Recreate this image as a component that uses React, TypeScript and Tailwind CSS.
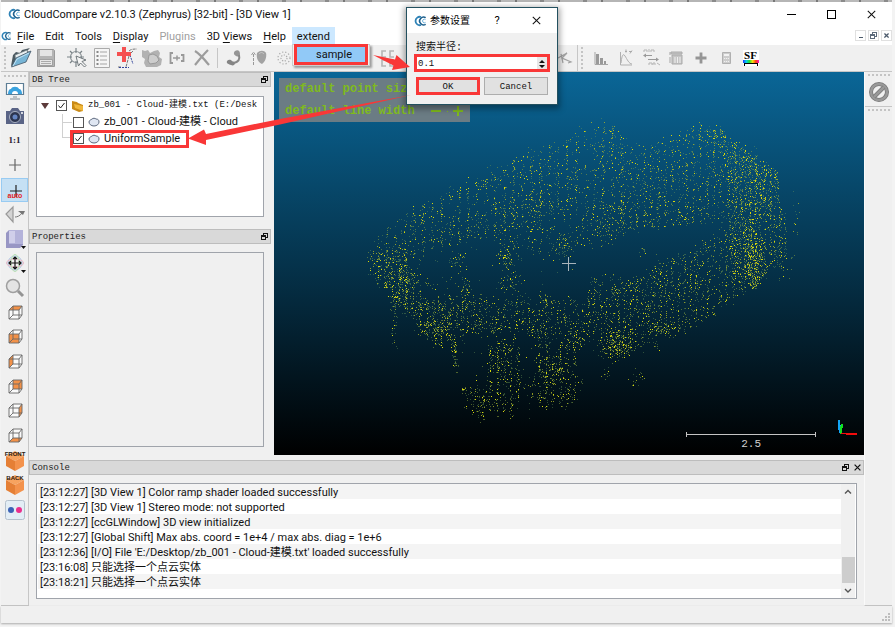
import type { ReactNode } from "react";

const UI = "font-['Roboto','Noto_Sans_CJK_SC',sans-serif]";
const MONO = "font-['Liberation_Mono','Noto_Sans_CJK_SC',monospace]";

/* ---------- point cloud ---------- */
type Pt = [number, number];

function rng(seed: number) {
  let s = seed;
  return () => {
    s = (s * 1664525 + 1013904223) >>> 0;
    return s / 4294967296;
  };
}

function inside(poly: Pt[], x: number, y: number) {
  let hit = false;
  for (let i = 0, j = poly.length - 1; i < poly.length; j = i++) {
    const [xi, yi] = poly[i];
    const [xj, yj] = poly[j];
    if (yi > y !== yj > y && x < ((xj - xi) * (y - yi)) / (yj - yi) + xi) hit = !hit;
  }
  return hit;
}

const WALLS: { n: number; step: number; poly: Pt[] }[] = [
  { n: 1350, step: 9, poly: [[364, 250], [380, 234], [415, 208], [450, 190], [520, 155], [580, 130], [600, 123], [612, 125], [625, 136], [625, 224], [600, 208], [580, 202], [540, 216], [505, 232], [480, 238], [450, 244], [430, 252], [400, 262], [366, 276]] },
  { n: 250, step: 6, poly: [[496, 205], [625, 205], [625, 236], [612, 242], [575, 246], [562, 256], [540, 250], [510, 264], [500, 255]] },
  { n: 1250, step: 7, poly: [[622, 138], [650, 147], [680, 133], [703, 122], [735, 142], [778, 172], [780, 200], [745, 225], [700, 222], [660, 228], [622, 232]] },
  { n: 950, step: 5, poly: [[712, 128], [745, 150], [777, 173], [779, 201], [786, 215], [786, 258], [768, 268], [757, 287], [735, 280], [725, 240], [732, 190]] },
  { n: 240, step: 4, poly: [[744, 222], [752, 220], [763, 255], [758, 285], [749, 285], [744, 255]] },
  { n: 1250, step: 6, poly: [[590, 276], [605, 292], [650, 270], [700, 247], [715, 234], [750, 222], [766, 250], [768, 274], [735, 300], [712, 314], [690, 330], [665, 330], [640, 346], [612, 343], [592, 330], [586, 298]] },
  { n: 560, step: 7, poly: [[368, 256], [400, 248], [410, 272], [425, 298], [452, 312], [454, 330], [450, 344], [438, 348], [418, 326], [394, 300], [376, 280]] },
  { n: 44, step: 5, poly: [[390, 300], [397, 300], [398, 344], [391, 344]] },
  { n: 520, step: 6, poly: [[425, 298], [460, 294], [500, 300], [545, 296], [590, 302], [592, 330], [580, 342], [545, 336], [520, 328], [490, 334], [455, 332]] },
  { n: 60, step: 5, poly: [[449, 335], [455, 335], [459, 372], [453, 368]] },
  { n: 300, step: 7, poly: [[486, 345], [500, 338], [520, 348], [522, 392], [513, 414], [480, 418], [470, 408], [476, 392], [487, 380]] },
  { n: 330, step: 7, poly: [[530, 330], [545, 335], [552, 355], [574, 330], [582, 345], [576, 372], [586, 388], [576, 400], [562, 410], [545, 404], [530, 396], [536, 362]] },
];

const BLOBS: [number, number, number, number, number][] = [
  [617, 345, 15, 10, 220], [662, 328, 14, 6, 80], [552, 371, 9, 10, 60], [507, 256, 9, 9, 60],
  [562, 245, 8, 10, 56], [457, 260, 6, 8, 32], [465, 288, 4, 14, 34], [511, 282, 8, 9, 46],
  [545, 300, 8, 4, 26], [605, 222, 16, 16, 80], [405, 280, 12, 18, 110], [433, 328, 12, 7, 60],
  [475, 398, 8, 14, 50], [605, 373, 4, 6, 10], [638, 380, 6, 8, 18], [643, 253, 4, 4, 8],
  [745, 165, 8, 20, 50], [717, 133, 8, 7, 30], [795, 212, 3, 16, 12], [785, 262, 6, 12, 26],
  [655, 345, 6, 5, 12], [536, 215, 8, 24, 40], [464, 390, 5, 4, 14], [500, 365, 12, 22, 40],
  [480, 320, 40, 24, 90], [560, 330, 40, 20, 90], [615, 290, 18, 14, 50], [530, 260, 50, 30, 36],
  [540, 385, 30, 22, 70], [660, 300, 40, 30, 60], [440, 290, 24, 26, 40],
];

function buildCloud() {
  const r = rng(2103);
  const layers = ["", "", "", ""];
  const put = (x: number, y: number) => {
    const k = r();
    const i = k < 0.36 ? 0 : k < 0.64 ? 1 : k < 0.87 ? 2 : 3;
    layers[i] += `M${Math.round(x)} ${Math.round(y)}h1v1h-1z`;
  };
  for (const { n, step, poly } of WALLS) {
    const xs = poly.map((p) => p[0]);
    const ys = poly.map((p) => p[1]);
    const x0 = Math.min(...xs);
    const y0 = Math.min(...ys);
    const w = Math.max(...xs) - x0;
    const h = Math.max(...ys) - y0;
    let left = n;
    while (left > 0) {
      let x = x0 + r() * w;
      const y = y0 + r() * h;
      if (r() < 0.5) x = Math.round(x / step) * step + (r() - 0.5) * 2;
      if (inside(poly, x, y)) {
        put(x, y + (r() + r() - 1) * 7);
        left--;
      }
    }
  }
  for (const [cx, cy, sx, sy, n] of BLOBS) {
    for (let i = 0; i < n; i++) {
      put(cx + (r() + r() + r() - 1.5) * 1.3 * sx, cy + (r() + r() + r() - 1.5) * 1.3 * sy);
    }
  }
  return layers;
}

const CLOUD = buildCloud();

function Scene() {
  return (
    <svg viewBox="274 72 590 383" preserveAspectRatio="xMidYMid meet" className="absolute inset-0 h-full w-full" shapeRendering="crispEdges">
      <path d={CLOUD[0]} fill="#6b9a58" opacity=".42" />
      <path d={CLOUD[1]} fill="#8ea638" opacity=".55" />
      <path d={CLOUD[2]} fill="#b0b820" opacity=".8" />
      <path d={CLOUD[3]} fill="#d8d808" />
      <path d="M562 263.500h14M568.500 257v14" stroke="#a9b4bb" />
      <path d="M686.500 434.500h129M686.500 432v5M815.500 432v5" stroke="#c4c4c4" fill="none" />
      <path d="M838 420h2v5h2v9h-2l-2-6z" fill="#12a5f5" />
      <path d="M841 424h2v4h-1v6h-2v-5z" fill="#10e020" />
      <path d="M841 433h16v2h-11v-1h-5z" fill="#f20c0c" />
    </svg>
  );
}

/* ---------- icons ---------- */
function Svg({ s = 22, children }: { s?: number; children: ReactNode }) {
  return (
    <svg width={s} height={s} viewBox="0 0 22 22" fill="none" className="shrink-0">
      {children}
    </svg>
  );
}

function CCLogo({ s = 12 }: { s?: number }) {
  return (
    <svg width={s} height={s} viewBox="0 0 12 12" fill="none" className="shrink-0">
      <path d="M7 2A4.200 4.200 0 1 0 7 10" stroke="#2f83b7" strokeWidth="1.800" />
      <path d="M6 4.200A2.200 2.200 0 0 0 6 7.800" stroke="#8cc4e4" strokeWidth=".9" />
      <path d="M11.700 2.700A3.900 3.900 0 1 0 11.700 9.300" stroke="#1d5f8c" strokeWidth="1.500" />
      <path d="M11.500 4.600A1.800 1.800 0 1 0 11.500 7.400" stroke="#6fb3db" strokeWidth="1" />
    </svg>
  );
}

function FloatIcon({ c = "#111" }: { c?: string }) {
  return (
    <svg width="7" height="7" viewBox="0 0 7 7" fill="none" shapeRendering="crispEdges">
      <path d="M2 .500h5M2.500 1v2M6.500 1v4M5 4.500h2M0 2.500h5M0 3.500h5M.5 3v4M4.500 3v4M0 6.500h5" stroke={c} />
    </svg>
  );
}

function CloseIcon({ s = 7, c = "#111", w = 1.4 }: { s?: number; c?: string; w?: number }) {
  return (
    <svg width={s} height={s} viewBox="0 0 8 8" fill="none">
      <path d="M.7.7l6.600 6.600M7.300.7L.7 7.300" stroke={c} strokeWidth={w} />
    </svg>
  );
}

const OpenIcon = (
  <Svg>
    <path d="M1 19L3 8l3-3 4 1 2-3 8-2-3 3 3 1-4 9z" fill="#4b5960" />
    <path d="M5 8l12-5 1 4-12 9z" fill="#e8eef0" stroke="#67757b" strokeWidth=".7" />
    <path d="M1.500 20L6 11l15-7-5 11z" fill="#77b5d6" stroke="#456" strokeWidth=".8" />
    <path d="M3 19l4-7 12-6" stroke="#cde8f5" strokeWidth=".9" />
  </Svg>
);
const SaveIcon = (
  <Svg>
    <path d="M2.500 2.500h16l1 1v16h-17z" fill="#b4b4b4" stroke="#9a9a9a" />
    <path d="M5 3h12v6H5z" fill="#e4e4e4" />
    <path d="M4.500 12.500h13v6h-13z" fill="#e6e6e6" stroke="#a0a0a0" />
    <path d="M6 14.500h10M6 16.500h10" stroke="#aaa" />
  </Svg>
);
const PickIcon = (
  <Svg>
    <circle cx="10" cy="10" r="5.500" stroke="#8d9498" strokeWidth="1.200" />
    <path d="M10 1v5M10 14v6M1 10h5M14 10h4M4 4l2 2M16 4l-2 2M4 16l2-2" stroke="#7b8488" strokeWidth="1.200" />
    <path d="M10 9l10 4-4 1.500 4 4-1.500 1.500-4-4-2 3z" fill="#f4f4f4" stroke="#70787c" />
  </Svg>
);
const ListIcon = (
  <Svg>
    <path d="M3.500 1.500h15v19h-15z" fill="#f5f5f5" stroke="#aaa" />
    <path d="M5.500 5h2M5.500 9h2M5.500 13h2M5.500 17h2" stroke="#888" strokeWidth="2" />
    <path d="M9 5h7M9 9h7M9 13h7M9 17h7" stroke="#a5a5a5" strokeWidth="1.200" />
  </Svg>
);
const TransIcon = (
  <Svg>
    <path d="M2 20h3M13 4c2-2 5-2 8-2M13 9l-3 11M17 4l-4 4" stroke="#777" strokeDasharray="3 1" />
    <path d="M14 8l3 9M3 20.500h10" stroke="#33469c" strokeDasharray="2 1" />
    <path d="M6 0h4v5h5v4h-5v6H6V9H1V5h5z" fill="#f55050" />
  </Svg>
);
const CloneIcon = (
  <Svg>
    <path d="M1 3l3 1 3-1 2 3 4-2 4-1 2 3-1 4 3 2-1 6-4 2H5l-2-4 1-4-3-2z" fill="#b2b2b2" />
    <path d="M8 8l4-1 4 2 2 4-3 3-6 1-2-3z" fill="#cdcdcd" stroke="#999" />
  </Svg>
);
const MergeIcon = (
  <Svg>
    <path d="M7 6H4.500v10H7M15 8h2.500v6H15" stroke="#999" strokeWidth="1.800" />
    <path d="M7 11h7M11 8.500v5" stroke="#999" strokeWidth="1.500" />
  </Svg>
);
const DeleteIcon = (
  <Svg>
    <path d="M4 4c5 3 9 8 14 14M17 3C12 8 8 13 4 18" stroke="#9c9c9c" strokeWidth="2.200" />
  </Svg>
);
const RegIcon = (
  <Svg>
    <path d="M12 4c3-2 5 0 5 3s-2 3-4 2-3-3-1-5z" fill="#959595" />
    <path d="M4 14c2-2 4-1 5 0s3 0 3 2-2 3-4 2-5-1-4-4z" fill="#858585" />
    <path d="M16 8c1 4-1 7-5 8" stroke="#888" strokeWidth="2" />
  </Svg>
);
const ShieldIcon = (
  <Svg>
    <path d="M9 6c3-3 7-3 9 0 1 4-1 9-4 11-4-2-6-6-5-11z" fill="#a2a2a2" />
    <path d="M11 7c2-2 3-2 5 0" stroke="#c9c9c9" />
    <path d="M5.500 18V6M3.500 8l2-3 2 3" stroke="#999" strokeDasharray="3 1" />
  </Svg>
);
const DotsIcon = (
  <Svg>
    <circle cx="11" cy="11" r="6" stroke="#aaa" strokeWidth="1.200" strokeDasharray="1.200 2" />
    <circle cx="11" cy="11" r="3" stroke="#aaa" strokeWidth="1.200" strokeDasharray="1.200 1.500" />
  </Svg>
);
const CompIcon = (
  <Svg>
    <path d="M12 4H8v6h4M20 4h-4v6h4M12 13H8v6h4M20 13h-4v6h4" stroke="#b5b5b5" strokeWidth="1.600" />
  </Svg>
);
const ZigIcon = (
  <Svg>
    <path d="M4 11L13 6l-5 5 9 4-3 1M7 7l2 9" stroke="#a2a2a2" strokeWidth="1.200" />
  </Svg>
);
const HistIcon = (
  <Svg>
    <path d="M5 5v12.500h13" stroke="#a5a5a5" />
    <path d="M6 7h3v10H6zM10 11h3v6h-3zM14 14h2v3h-2z" fill="#999" />
  </Svg>
);
const CurveIcon = (
  <Svg>
    <path d="M5.500 5v13H17M6 16C7 8 8 6 10 9s4 8 7 8" stroke="#b0b0b0" />
    <path d="M10 4.500h2M14 4.500h3M11 2.500v3M15 6.500l2-3" stroke="#aaa" />
  </Svg>
);
const MinMaxIcon = (
  <Svg>
    <path d="M5 8.500h7M8 12.500h8" stroke="#999" strokeWidth="1.200" />
    <path d="M3 8.500l3-2v4zM19 12.500l-3-2v4z" fill="#999" />
    <path d="M4 5V3h3v2M9 2v3M11 5V3h3v2M9 18v-2h3v2M13 18v-2h2v2M17 16l3 2" stroke="#b5b5b5" />
  </Svg>
);
const GridIcon = (
  <Svg>
    <path d="M6 5h11v2H6zM7 8h10v9H7z" fill="#c5c5c5" stroke="#aaa" />
    <path d="M10 10v6M12.500 10v6M15 10v6" stroke="#eee" />
    <path d="M5 5v3M5 10v6" stroke="#a5a5a5" />
  </Svg>
);
const PlusIcon = (
  <Svg>
    <path d="M11 5.500v11M5.500 11h11" stroke="#959595" strokeWidth="2.800" />
  </Svg>
);
const CalcIcon = (
  <Svg>
    <path d="M7.500 5.500h8v11h-8z" fill="#ccc" stroke="#b0b0b0" />
    <path d="M9 8h5" stroke="#f2f2f2" strokeWidth="2" />
    <path d="M9 11.500h5M9 14.500h5" stroke="#f0f0f0" strokeDasharray="1.200 .8" />
  </Svg>
);

/* ---------- left side icons ---------- */
const faces: Record<string, string> = {
  top: "M2 5l4-4h9l-3 4z",
  front: "M2 5h10v9H2z",
  left: "M2 5l4-4v9l-4 4z",
  back: "M6 1h9v9H6z",
  right: "M12 5l3-4v9l-3 4z",
  bottom: "M2 14l4-4h9l-3 4z",
};

function CubeIcon({ face }: { face: string }) {
  return (
    <svg width="16" height="16" viewBox="0 0 16 16" fill="none">
      <path d="M2 5l4-4h9v9l-3 4H2z" fill="#fafafa" />
      <path d={faces[face]} fill="#f29148" />
      <path d="M2 5h10v9H2zM2 5l4-4h9l-3 4M15 1v9l-3 4M6 1v9h9M6 10l-4 4" stroke="#666" strokeWidth=".9" />
    </svg>
  );
}

function BoxIcon({ label }: { label: string }) {
  return (
    <svg width="22" height="24" viewBox="0 0 22 24">
      <path d="M2 7l9-5 9 5-9 5z" fill="#f7a35f" />
      <path d="M2 7l9 5v10l-9-5z" fill="#e57f35" />
      <path d="M20 7l-9 5v10l9-5z" fill="#f3924c" />
      <text x="11" y="7" textAnchor="middle" fontSize="6" fontWeight="700" fill="#2a1a10" fontFamily="Liberation Sans, sans-serif">
        {label}
      </text>
    </svg>
  );
}

const SIDE: { name: string; icon: ReactNode; on?: boolean }[] = [
  {
    name: "Display settings",
    icon: (
      <Svg>
        <path d="M2.500 3.500h17v11h-17z" fill="#fff" stroke="#5d7e96" strokeWidth="1.200" />
        <path d="M4 14c0-3 1-5 3-5 1-3 7-3 8 0 2 0 3 2 3 5z" fill="#3ba3df" />
        <path d="M8 14a3 3 0 0 1 6 0z" fill="#fff" />
        <path d="M9 16h4v2h3v2H6v-2h3z" fill="#b9bfc3" />
      </Svg>
    ),
  },
  {
    name: "Camera",
    icon: (
      <Svg>
        <path d="M2 6h4l2-3h6l2 3h4v13H2z" fill="#5a6486" />
        <circle cx="11" cy="12" r="5.500" fill="#2c3550" stroke="#aab2c4" />
        <circle cx="11" cy="12" r="2.500" fill="#6585c2" />
        <path d="M17 7h2v2h-2z" fill="#d6dae2" />
      </Svg>
    ),
  },
  { name: "Zoom 1:1", icon: <span className="font-['Liberation_Serif',serif] text-[9px] font-bold text-[#2a1a30]">1:1</span> },
  {
    name: "Pick center",
    icon: (
      <Svg>
        <path d="M11 5v12M5 11h12" stroke="#666" strokeWidth="1.200" />
      </Svg>
    ),
  },
  {
    name: "Auto pick center",
    on: true,
    icon: (
      <svg width="22" height="22" viewBox="0 0 22 22">
        <path d="M12 6v12M6 12h12" stroke="#222" strokeWidth="1.200" />
        <text x="11" y="19" textAnchor="middle" fontSize="7" fontWeight="700" fill="#e32222" fontFamily="Liberation Sans, sans-serif">
          auto
        </text>
      </svg>
    ),
  },
  {
    name: "Flip view",
    icon: (
      <Svg>
        <path d="M9 4v15L2 11z" fill="#d4d4d4" stroke="#999" strokeWidth="1.200" />
        <path d="M11 14c2 0 5-1 7-4" stroke="#777" />
        <path d="M14 8l7 0-2 4z" fill="#777" />
      </Svg>
    ),
  },
  {
    name: "Solid view",
    icon: (
      <Svg>
        <path d="M2 5l3-3h14v15l-3 3H2z" fill="#9896c4" />
        <path d="M5 2h14v14H5z" fill="#b4b3da" />
        <path d="M5 3h6v12H5z" fill="#d0cfea" />
        <path d="M17 18h5l-2.500 3z" fill="#111" />
      </Svg>
    ),
  },
  {
    name: "Move mode",
    icon: (
      <Svg>
        <circle cx="11" cy="11" r="7" stroke="#a9c9e6" />
        <ellipse cx="11" cy="11" rx="8.500" ry="4" stroke="#e7b4c4" />
        <ellipse cx="11" cy="11" rx="4" ry="8.500" stroke="#b6dfb0" />
        <path d="M11 5v12M5 11h12M9 7l2-2 2 2M9 15l2 2 2-2M7 9l-2 2 2 2M15 9l2 2-2 2" stroke="#111" strokeWidth="1.200" />
        <path d="M17 18h5l-2.500 3z" fill="#111" />
      </Svg>
    ),
  },
  {
    name: "Zoom",
    icon: (
      <Svg>
        <circle cx="9" cy="9" r="6.500" fill="#e4e4e4" stroke="#9f9f9f" strokeWidth="1.500" />
        <path d="M14 14l5 5" stroke="#949494" strokeWidth="3" />
      </Svg>
    ),
  },
  { name: "Top view", icon: <CubeIcon face="top" /> },
  { name: "Front view", icon: <CubeIcon face="front" /> },
  { name: "Left view", icon: <CubeIcon face="left" /> },
  { name: "Back view", icon: <CubeIcon face="back" /> },
  { name: "Right view", icon: <CubeIcon face="right" /> },
  { name: "Bottom view", icon: <CubeIcon face="bottom" /> },
  { name: "Front isometric", icon: <BoxIcon label="FRONT" /> },
  { name: "Back isometric", icon: <BoxIcon label="BACK" /> },
  {
    name: "Stereo",
    icon: (
      <Svg>
        <rect x="1.500" y="1.500" width="19" height="19" rx="2" fill="#e3edf5" stroke="#b4c0cc" />
        <circle cx="7" cy="11" r="3" fill="#3b62b5" />
        <circle cx="15" cy="11" r="3" fill="#ea2f8c" />
      </Svg>
    ),
  },
];

/* ---------- shared parts ---------- */
function Tool({ name, children }: { name: string; children: ReactNode }) {
  return (
    <button aria-label={name} className="flex h-[25px] w-[25px] shrink-0 items-center justify-center">
      {children}
    </button>
  );
}

function VGrip() {
  return <span className="h-[22px] w-[2px] shrink-0 border-l-2 border-dotted border-[#c4c4c4]" />;
}

function HGrip() {
  return <span className="h-[2px] w-[22px] shrink-0 border-t-2 border-dotted border-[#c4c4c4]" />;
}

function DockHeader({ title, closable = false }: { title: string; closable?: boolean }) {
  return (
    <header className={`flex h-[15px] shrink-0 items-center gap-[5px] border border-[#bdbdbd] bg-[#d9d9d9] px-[2px] text-[#222] ${MONO}`}>
      <h2 className="flex-1 pt-px text-[9px] leading-[14px]">{title}</h2>
      <button aria-label={`Float ${title}`}>
        <FloatIcon />
      </button>
      {closable && (
        <button aria-label={`Close ${title}`}>
          <CloseIcon />
        </button>
      )}
    </header>
  );
}

function Check({ id, on }: { id: string; on: boolean }) {
  return (
    <span className="relative flex h-[11px] w-[11px] shrink-0">
      <input id={id} type="checkbox" defaultChecked={on} className="peer h-full w-full appearance-none border border-[#555] bg-white" />
      <svg viewBox="0 0 11 11" fill="none" className="pointer-events-none absolute inset-0 hidden peer-checked:block">
        <path d="M2.500 5.500l2 2.500 4-5" stroke="#222" />
      </svg>
    </span>
  );
}

function CloudIcon() {
  return (
    <svg width="12" height="10" viewBox="0 0 12 10">
      <path d="M1 5c0-2 2-2 3-3s3-1 4 0c2 0 3 1 3 3s-2 4-5 4-5-2-5-4z" fill="#dfe6f2" stroke="#5f6b80" />
    </svg>
  );
}

const MENUS: [string, string, string][] = [
  ["", "F", "ile"],
  ["Edit", "", ""],
  ["Tools", "", ""],
  ["", "D", "isplay"],
  ["Plugins", "", ""],
  ["3D ", "V", "iews"],
  ["", "H", "elp"],
  ["extend", "", ""],
];

const LOG = [
  "[23:12:27] [3D View 1] Color ramp shader loaded successfully",
  "[23:12:27] [3D View 1] Stereo mode: not supported",
  "[23:12:27] [ccGLWindow] 3D view initialized",
  "[23:12:27] [Global Shift] Max abs. coord = 1e+4 / max abs. diag = 1e+6",
  "[23:12:36] [I/O] File 'E:/Desktop/zb_001 - Cloud-建模.txt' loaded successfully",
  "[23:16:08] 只能选择一个点云实体",
  "[23:18:21] 只能选择一个点云实体",
];

function ParamDialog() {
  return (
    <div role="dialog" aria-label="参数设置" className="absolute top-[7px] left-[406px] w-[152px] border border-[#23505f] bg-[#f0f0f0] pb-[9px] shadow-[0_2px_6px_2px_rgba(0,0,0,0.35)]">
      <div className={`flex h-[25px] items-center bg-white pl-[7px] text-black ${UI}`}>
        <CCLogo />
        <span className="ml-[4px] flex-1 text-[10px] leading-[14px]">参数设置</span>
        <button className="w-[36px] text-[11px] leading-[14px]">?</button>
        <button aria-label="Close dialog" className="flex w-[42px] justify-center">
          <CloseIcon s={9} w={0.9} />
        </button>
      </div>
      <form className={`px-[9px] text-[#111] ${MONO}`} onSubmit={(e) => e.preventDefault()}>
        <label htmlFor="radius" className="block pt-[8px] text-[10px] leading-[14px]">
          搜索半径:
        </label>
        <div className="mt-px flex h-[15px] items-center border border-[#7aa7c7] bg-white">
          <input id="radius" type="text" defaultValue="0.1" className="w-0 flex-1 bg-white pt-[2px] pl-px text-[9px] leading-[11px] outline-none" />
          <svg width="10" height="13" viewBox="0 0 10 13" className="bg-[#e8e8e8]">
            <path d="M2 6l3-3 3 3zM2 8l3 3 3-3z" fill="#111" />
          </svg>
        </div>
        <div className="mt-[6px] grid grid-cols-2 gap-[4px] text-[9px] leading-[16px]">
          <button className="h-[18px] border border-[#adadad] bg-[#e1e1e1] pt-px">OK</button>
          <button className="h-[18px] border border-[#adadad] bg-[#e1e1e1] pt-px">Cancel</button>
        </div>
      </form>
    </div>
  );
}

function Annotations() {
  return (
    <svg width="895" height="627" viewBox="0 0 895 627" fill="none" className="pointer-events-none absolute top-0 left-0">
      <g stroke="#f93737" strokeWidth="3">
        <path d="M295.500 45.500h71v18h-71z" />
        <path d="M415.500 55.500h133v15h-133z" />
        <path d="M417.500 78.500h61v15h-61z" />
        <path d="M71.500 131.500h116v15h-116z" />
      </g>
      <path d="M373 55l22 4.500 1.500-4.500 13.500 12-18 3 1.500-4.500z" fill="#f93737" />
      <path d="M411 95L280 119l-74 15-2-4.500-16 9 18 6.500v-5l74-15.500z" fill="#f93737" />
    </svg>
  );
}

export default function App() {
  return (
    <div className={`relative flex h-screen w-full flex-col overflow-hidden bg-[#f3f3f3] pr-[3px] pb-[4px] pl-px text-[#111] ${UI}`}>
      <div className="h-[2px] shrink-0 bg-[repeating-linear-gradient(90deg,#b5b5b5_0_23px,#8a8a8a_23px_27px,#b9b9b9_27px_41px,#777_41px_43px)]" />

      <div className="flex h-[24px] shrink-0 items-center bg-white pr-[16px] pl-[7px]">
        <CCLogo />
        <h1 className="ml-[4px] flex-1 pt-px text-[11px] leading-[16px]">CloudCompare v2.10.3 (Zephyrus) [32-bit] - [3D View 1]</h1>
        <div className="flex w-[89px] items-center justify-between">
          <button aria-label="Minimize" className="w-[9px] border-t border-black" />
          <button aria-label="Maximize" className="h-[9px] w-[9px] border border-black" />
          <button aria-label="Close">
            <CloseIcon s={9} w={0.9} />
          </button>
        </div>
      </div>

      <nav className="relative flex h-[19px] shrink-0 items-center gap-px bg-white">
        <CCLogo s={10} />
        {MENUS.map(([pre, key, post]) => (
          <button
            key={pre + key + post}
            className={`h-[18px] px-[5px] text-[11px] leading-[19px] ${pre === "extend" ? "bg-[#cce8ff]" : ""} ${pre === "Plugins" ? "text-[#a0a0a0]" : ""}`}
          >
            {pre}
            {key && <u className="underline-offset-2">{key}</u>}
            {post}
          </button>
        ))}
        <div className="ml-auto flex gap-[2px]">
          <button aria-label="Minimize view" className="flex h-[11px] w-[11px] items-end justify-center border border-[#e0e0e0] pb-[2px]">
            <span className="w-[4px] border-t border-[#4c5a6b]" />
          </button>
          <button aria-label="Restore view" className="flex h-[11px] w-[11px] items-center justify-center border border-[#e0e0e0]">
            <FloatIcon c="#5c6a7b" />
          </button>
          <button aria-label="Close view" className="flex h-[11px] w-[11px] items-center justify-center border border-[#e0e0e0]">
            <CloseIcon s={5} c="#4c5a6b" w={2} />
          </button>
        </div>
        <div role="menu" className="absolute top-[18px] left-[291px] w-[78px] border border-[#ccc] bg-[#f2f2f2] p-px shadow-[2px_2px_2px_rgba(0,0,0,0.35)]">
          <button role="menuitem" className="block h-[18px] w-full bg-[#91c9f7] pl-[6px] text-[11px] leading-[18px]">
            sample
          </button>
        </div>
      </nav>

      <div className="flex h-[27px] shrink-0 items-center border-b border-[#c6c6c6] bg-[#f0f0f0] pl-[3px]">
        <VGrip />
        <div className="flex pl-[2px]">
          <Tool name="Open">{OpenIcon}</Tool>
          <Tool name="Save">{SaveIcon}</Tool>
        </div>
        <div className="flex pl-[6px]">
          <Tool name="Point picking">{PickIcon}</Tool>
          <Tool name="Point list">{ListIcon}</Tool>
          <Tool name="Translate / rotate">{TransIcon}</Tool>
          <Tool name="Clone">{CloneIcon}</Tool>
          <Tool name="Merge">{MergeIcon}</Tool>
          <Tool name="Delete">{DeleteIcon}</Tool>
        </div>
        <span className="mx-[3px] h-[20px] border-l border-[#c6c6c6]" />
        <Tool name="Register">{RegIcon}</Tool>
        <Tool name="Fine registration">{ShieldIcon}</Tool>
        <Tool name="Subsample">{DotsIcon}</Tool>
        <span className="w-[76px] shrink-0" />
        <Tool name="Cloud distance">{CompIcon}</Tool>
        <span className="w-[155px] shrink-0" />
        <Tool name="Segment">{ZigIcon}</Tool>
        <span className="mr-[3px] h-[26px] border-l border-[#c6c6c6]" />
        <VGrip />
        <div className="flex pl-[5px]">
          <Tool name="Histogram">{HistIcon}</Tool>
          <Tool name="Statistics">{CurveIcon}</Tool>
          <Tool name="Filter by value">{MinMaxIcon}</Tool>
          <Tool name="Delete scalar field">{GridIcon}</Tool>
          <Tool name="Add scalar field">{PlusIcon}</Tool>
          <Tool name="Arithmetic">{CalcIcon}</Tool>
          <Tool name="Scalar field scale">
            <span className="flex flex-col items-center bg-white">
              <span className="font-['Liberation_Serif',serif] text-[11px] leading-[10px] font-bold text-black">SF</span>
              <span className="h-[3px] w-[16px] bg-[linear-gradient(90deg,#2030ff,#00d0f0,#20e030,#f8e010,#ff4010,#ff10c0)]" />
              <span className="h-[3px] w-[14px] border-x border-t border-black" />
            </span>
          </Tool>
        </div>
      </div>

      <div className="flex min-h-0 flex-1 bg-[#f0f0f0]">
        <aside className="flex w-[28px] shrink-0 flex-col items-center border-r border-b border-[#c6c6c6] pt-[3px]">
          <HGrip />
          <div className="mt-[2px] flex h-[443px] w-full flex-col justify-between">
            {SIDE.map((b) => (
              <button
                key={b.name}
                aria-label={b.name}
                className={`flex h-[24px] w-full items-center justify-center ${b.on ? "border border-[#98cbf2] bg-[#c5e0f4]" : ""}`}
              >
                {b.icon}
              </button>
            ))}
          </div>
        </aside>

        <main className="flex min-w-0 flex-1 flex-col">
          <div className="flex min-h-0 flex-1 gap-[3px]">
            <div className="flex w-[242px] shrink-0 flex-col">
              <DockHeader title="DB Tree" />
              <div className="mx-[7px] mt-[9px] h-[121px] shrink-0 overflow-hidden border border-[#a0a4ab] bg-white">
                <ul className="text-[11px]">
                  <li className={`flex h-[17px] items-center whitespace-nowrap text-[9px] ${MONO}`}>
                    <svg width="8" height="6" viewBox="0 0 8 6" className="mr-[7px] ml-[4px] shrink-0">
                      <path d="M0 0h8L4 6z" fill="#5c3a3a" />
                    </svg>
                    <Check id="n0" on />
                    <svg width="13" height="12" viewBox="0 0 13 12" className="mx-[4px] shrink-0">
                      <path d="M1 1l5 1 1 1 5 2v6l-4 1-7-3z" fill="#c98a17" />
                      <path d="M3 4l9 2v5l-8-3z" fill="#f0b73a" />
                    </svg>
                    <label htmlFor="n0" className="pt-px">
                      zb_001 - Cloud-建模.txt (E:/Desk
                    </label>
                  </li>
                  <li className="flex h-[16px] items-center whitespace-nowrap">
                    <span className="ml-[25px] h-full w-[11px] border-l border-[#d0d0d0] pt-[8px]">
                      <span className="block w-[9px] border-t border-[#d0d0d0]" />
                    </span>
                    <Check id="n1" on={false} />
                    <span className="mx-[4px]">
                      <CloudIcon />
                    </span>
                    <label htmlFor="n1" className="pt-px">
                      zb_001 - Cloud-建模 - Cloud
                    </label>
                  </li>
                  <li className="flex h-[17px] items-center whitespace-nowrap">
                    <span className="ml-[25px] h-full w-[11px]">
                      <span className="block h-[8px] w-[9px] border-b border-l border-[#d0d0d0]" />
                    </span>
                    <Check id="n2" on />
                    <span className="mx-[4px]">
                      <CloudIcon />
                    </span>
                    <label htmlFor="n2" className="pt-px">
                      UniformSample
                    </label>
                  </li>
                </ul>
              </div>
              <div className="mt-[12px] flex min-h-0 flex-1 flex-col">
                <DockHeader title="Properties" />
                <div className="mx-[7px] mt-[8px] mb-[8px] flex-1 border border-[#a0a4ab]" />
              </div>
            </div>

            <section aria-label="3D View 1" className="relative min-w-0 flex-1 bg-[linear-gradient(#0a6697,#000)]">
              <Scene />
              <div className="absolute top-[6px] left-[5px] h-[44px] w-[191px] bg-[#6b7c84] pl-[6px] font-['Liberation_Mono',monospace] text-[12px] leading-[22px] font-bold whitespace-pre text-[#7fba1e]">
                <p className="h-[22px]">default point size - +</p>
                <p className="flex h-[22px] items-center">
                  default line width
                  <span className="ml-[16px] h-[2px] w-[10px] bg-[#7fba1e]" />
                  <span className="ml-[6px] h-px w-px bg-[#7fba1e]" />
                  <svg width="10" height="10" viewBox="0 0 10 10" className="ml-[5px]">
                    <path d="M4 0h2v4h4v2H6v4H4V6H0V4h4z" fill="#7fba1e" />
                  </svg>
                </p>
              </div>
              <span className="absolute right-[103px] bottom-[4px] font-['Liberation_Mono',monospace] text-[11px] leading-[14px] text-[#d0d0d0]">2.5</span>
            </section>
          </div>

          <section aria-label="Console" className="mt-[5px] flex h-[146px] shrink-0 flex-col pb-[7px]">
            <DockHeader title="Console" closable />
            <div className="mx-[7px] mt-[8px] flex min-h-0 flex-1 overflow-hidden border border-[#a0a4ab] bg-white px-px">
              <ol className="flex-1">
                {LOG.map((line, i) => (
                  <li key={i} className="h-[15px] pt-px pl-[2px] text-[11px] leading-[16px] whitespace-nowrap odd:bg-[#f4f4f4]">
                    {line}
                  </li>
                ))}
              </ol>
              <div className="flex w-[14px] flex-col items-center bg-[#f0f0f0]">
                <svg width="8" height="16" viewBox="0 0 8 16" fill="none">
                  <path d="M1 9.500l3-3 3 3" stroke="#555" strokeWidth="1.400" />
                </svg>
                <span className="flex-1" />
                <span className="h-[26px] w-[13px] bg-[#cdcdcd]" />
                <svg width="8" height="15" viewBox="0 0 8 15" fill="none">
                  <path d="M1 6l3 3 3-3" stroke="#555" strokeWidth="1.400" />
                </svg>
              </div>
            </div>
          </section>
        </main>

        <aside className="flex w-[28px] shrink-0 flex-col items-center border-b border-l border-b-[#c6c6c6] border-l-[#fafafa] pt-[2px]">
          <HGrip />
          <button aria-label="Remove filter" className="mt-[5px] mb-[3px]">
            <Svg>
              <circle cx="11" cy="11" r="8" stroke="#777" strokeWidth="4" />
              <circle cx="11" cy="11" r="8" stroke="#999" strokeWidth="2.500" />
              <path d="M6 16L16 6" stroke="#777" strokeWidth="4" />
              <path d="M6 16L16 6" stroke="#999" strokeWidth="2.500" />
            </Svg>
          </button>
          <span className="mb-[2px] w-full border-t border-[#c6c6c6]" />
          <HGrip />
        </aside>
      </div>

      <footer className="flex h-[17px] shrink-0 items-end justify-end bg-[#f0f0f0] p-[2px] shadow-[0_1px_2px_rgba(0,0,0,0.3)]">
        <svg width="8" height="8" viewBox="0 0 8 8" fill="#bdbdbd">
          <path d="M6 0h2v2H6zM3 3h2v2H3zM6 3h2v2H6zM0 6h2v2H0zM3 6h2v2H3zM6 6h2v2H6z" />
        </svg>
      </footer>

      <ParamDialog />
      <Annotations />
    </div>
  );
}
